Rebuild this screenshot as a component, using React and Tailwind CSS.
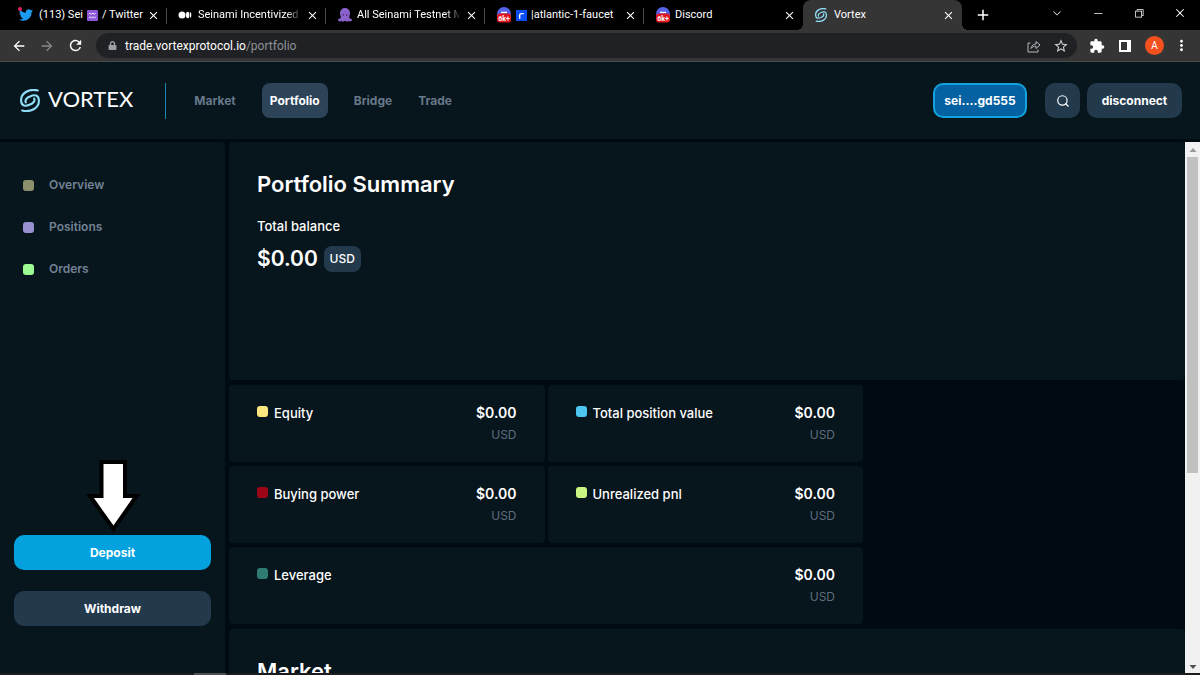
import { useState } from 'react';
import { FaTwitter, FaLock } from 'react-icons/fa';
import {
  MdArrowBack,
  MdArrowForward,
  MdRefresh,
  MdStarBorder,
  MdClose,
  MdAdd,
  MdMoreVert,
  MdExtension,
} from 'react-icons/md';
import { VscChromeMinimize, VscChromeRestore, VscChromeClose, VscChevronDown } from 'react-icons/vsc';
import { Search } from 'lucide-react';

function VortexMark({ className }) {
  return (
    <svg viewBox="0 0 56 65" className={className} fill="none" stroke="#8fdcf6" strokeWidth="6" strokeLinecap="round">
      <path d="M50 4C25-2 1 12 3 34c1 14 12 16 25 10 10-4 14-11 12-17" />
      <path d="M6 61c25 6 49-8 47-30-1-14-12-16-25-10-10 4-14 11-12 17" />
    </svg>
  );
}

function DiscordBadge() {
  return (
    <svg viewBox="0 0 16 16" className="size-4 shrink-0">
      <circle cx="8" cy="7" r="7" fill="#5562ea" />
      <path d="M5 5.500h6" stroke="#fff" strokeWidth="1.500" />
      <rect x="1" y="6.500" width="14" height="9" rx="3" fill="#e0161e" />
      <text x="8" y="13.500" textAnchor="middle" fontSize="7" fontWeight="700" fontFamily="Roboto, sans-serif" fill="#fff">
        6k+
      </text>
    </svg>
  );
}

function Medium() {
  return (
    <svg viewBox="0 0 14 14" className="size-[14px] shrink-0" fill="#fff">
      <circle cx="4" cy="7" r="3.500" />
      <ellipse cx="9.700" cy="7" rx="1.700" ry="3.300" />
      <ellipse cx="12.600" cy="7" rx=".7" ry="2.900" />
    </svg>
  );
}

function Octopus() {
  return (
    <svg viewBox="0 0 16 16" className="size-4 shrink-0" fill="#8b62cc">
      <path d="M8 1a5 5 0 0 0-5 5c0 2 .8 3 .8 4.200C3.800 12 1 11.200 1 13c0 1.500 2.500 1.800 4 .8l.5 1.200 2.500-1.300 2.500 1.300.5-1.200c1.500 1 4 .7 4-.8 0-1.800-2.800-1-2.800-2.800C12.200 9 13 8 13 6a5 5 0 0 0-5-5z" />
      <circle cx="6.300" cy="8" r=".8" fill="#3d2470" />
      <circle cx="9.700" cy="8" r=".8" fill="#3d2470" />
    </svg>
  );
}

function Aquarius() {
  return (
    <svg viewBox="0 0 12 12" className="size-[11px] shrink-0">
      <rect width="12" height="12" rx="1" fill="#8a55d6" />
      <path d="M2 4.500l1.500-1 1.500 1 1.500-1 1.500 1 1.500-1M2 8.500l1.500-1 1.500 1 1.500-1 1.500 1 1.500-1" stroke="#fff" fill="none" />
    </svg>
  );
}

function BlueSquare() {
  return (
    <svg viewBox="0 0 12 12" className="size-[11px] shrink-0">
      <rect width="12" height="12" fill="#0a4df0" />
      <path d="M4 9.500V6a2 2 0 0 1 2-2h2.500" stroke="#fff" strokeWidth="1.500" fill="none" />
    </svg>
  );
}

const tabs = [
  {
    id: 'twitter',
    icon: (
      <span className="relative shrink-0">
        <FaTwitter className="size-[14px] text-[#1d9bf0]" />
        <span className="absolute -left-px -top-px size-1 rounded-full bg-[#e0245e]" />
      </span>
    ),
    title: (
      <>
        (113) Sei <Aquarius /> / Twitter
      </>
    ),
  },
  { id: 'medium', icon: <Medium />, title: 'Seinami Incentivized T', fade: true },
  { id: 'octopus', icon: <Octopus />, title: 'All Seinami Testnet Mi', fade: true },
  {
    id: 'faucet',
    icon: <DiscordBadge />,
    title: (
      <>
        <BlueSquare /> |atlantic-1-faucet
      </>
    ),
  },
  { id: 'discord', icon: <DiscordBadge />, title: 'Discord' },
  { id: 'vortex', icon: <VortexMark className="size-[14px] shrink-0" />, title: 'Vortex', active: true },
];

function BrowserTab({ tab, divider }) {
  return (
    <div
      className={
        tab.active
          ? 'relative flex h-full min-w-0 max-w-[159px] flex-1 items-center rounded-t-lg bg-[#353536] pl-[11px] pr-[7px]'
          : 'relative flex h-full min-w-0 max-w-[159px] flex-1 items-center pl-[11px] pr-[7px]'
      }
    >
      {divider && <span className="absolute right-0 top-2 h-4 w-px bg-[#4a4a4c]" />}
      {tab.active && (
        <>
          <span className="absolute -left-1.5 bottom-0 size-1.5 bg-[radial-gradient(circle_at_top_left,transparent_6px,#353536_6px)]" />
          <span className="absolute -right-1.5 bottom-0 size-1.5 bg-[radial-gradient(circle_at_top_right,transparent_6px,#353536_6px)]" />
        </>
      )}
      <span className="flex w-5 shrink-0">{tab.icon}</span>
      <span
        className={
          tab.fade
            ? 'flex min-w-0 flex-1 whitespace-nowrap [mask-image:linear-gradient(to_right,black_85%,transparent)]'
            : 'flex min-w-0 flex-1 items-center gap-1 whitespace-nowrap'
        }
      >
        {tab.title}
      </span>
      <button aria-label="Close tab" className="ml-1 shrink-0">
        <MdClose className="size-[13px]" />
      </button>
    </div>
  );
}

function BrowserChrome() {
  return (
    <div className="shrink-0 font-[Roboto,sans-serif] text-white">
      <div className="flex h-[30px] items-center bg-black pl-2 text-[11px]">
        <div className="flex h-full min-w-0 flex-1">
          {tabs.map((tab, i) => (
            <BrowserTab key={tab.id} tab={tab} divider={i < 4} />
          ))}
          <button aria-label="New tab" className="ml-3">
            <MdAdd className="size-[18px]" />
          </button>
        </div>
        <div className="flex h-full items-center gap-[29px] pb-1 pr-[14px]">
          <button aria-label="Search tabs"><VscChevronDown className="size-3" /></button>
          <button aria-label="Minimize"><VscChromeMinimize className="size-3" /></button>
          <button aria-label="Restore"><VscChromeRestore className="size-3" /></button>
          <button aria-label="Close"><VscChromeClose className="size-3" /></button>
        </div>
      </div>
      <div className="flex h-8 items-center border-b border-[#4a4a4c] bg-[#353536] pl-[11px] pr-[14px]">
        <div className="flex items-center gap-3">
          <button aria-label="Back"><MdArrowBack className="size-4" /></button>
          <button aria-label="Forward"><MdArrowForward className="size-4 text-[#8a8a8c]" /></button>
          <button aria-label="Reload"><MdRefresh className="size-[17px]" /></button>
        </div>
        <div className="ml-3 flex h-[25px] min-w-0 flex-1 items-center rounded-full bg-[#202124] pl-3 pr-2">
          <FaLock className="size-[9px] text-[#9aa0a6]" />
          <span className="ml-2 flex-1 text-xs">
            trade.vortexprotocol.io<span className="text-[#8e9297]">/portfolio</span>
          </span>
          <button aria-label="Share">
            <svg viewBox="0 0 14 14" className="size-[14px]" fill="none" stroke="#b4b7bb">
              <path d="M3.500 4H1v9h10v-2.500" />
              <path d="M4 9.500c.5-3 2.500-4.500 5-4.500V2.500L13 6 9 9.500V7.200c-2 0-3.500.5-5 2.300z" strokeLinejoin="round" />
            </svg>
          </button>
          <button aria-label="Bookmark" className="ml-3"><MdStarBorder className="size-4 text-[#d0d2d5]" /></button>
        </div>
        <div className="ml-3 flex items-center gap-[13px]">
          <button aria-label="Extensions"><MdExtension className="size-4" /></button>
          <button aria-label="Side panel">
            <svg viewBox="0 0 14 14" className="size-[14px]">
              <path d="M2 2h10v10H2z" fill="none" stroke="#fff" strokeWidth="2" />
              <path d="M9 1h4v12H9z" fill="#fff" />
            </svg>
          </button>
          <button aria-label="Profile" className="flex size-[19px] items-center justify-center rounded-full bg-[#f4511e] text-[10px]">A</button>
          <button aria-label="Menu" className="-mx-1"><MdMoreVert className="size-[17px]" /></button>
        </div>
      </div>
    </div>
  );
}

const navLinks = ['Market', 'Portfolio', 'Bridge', 'Trade'];

function Header() {
  const [page, setPage] = useState('Portfolio');

  return (
    <header className="flex h-[77px] shrink-0 items-center bg-[#07151c] pl-5 pr-[18px] text-xs font-bold">
      <VortexMark className="h-[23px] w-5" />
      <span className="ml-2 pb-1 font-[Lato,sans-serif] text-[22px] font-normal leading-6 text-white">VORTEX</span>
      <span className="ml-8 h-9 w-px bg-[#1c86b4]" />
      <nav className="ml-7 flex gap-[26px]">
        {navLinks.map((name) => (
          <a
            key={name}
            href="#"
            onClick={() => setPage(name)}
            className={
              page === name
                ? 'flex h-[35px] items-center rounded-lg bg-[#2d4358] px-2 text-white'
                : 'flex h-[35px] items-center text-[#66788a]'
            }
          >
            {name}
          </a>
        ))}
      </nav>
      <div className="ml-auto flex items-center">
        <button className="h-[35px] w-[94px] rounded-[10px] border-2 border-[#12a2dd] bg-[#0461a2] text-white">sei....gd555</button>
        <button aria-label="Search" className="ml-[18px] flex h-[35px] w-[35px] items-center justify-center rounded-[10px] bg-[#233a4d] text-white">
          <Search className="size-[14px]" />
        </button>
        <button className="ml-[7px] h-[35px] w-[95px] rounded-[10px] bg-[#233a4d] text-white">disconnect</button>
      </div>
    </header>
  );
}

function Sidebar() {
  return (
    <aside className="flex w-[225px] shrink-0 flex-col rounded-tr bg-[#07151c] px-[14px] pb-[47px] pt-[33px] text-xs">
      <nav className="flex flex-col gap-[22px] px-[9px] font-semibold text-[#728294]">
        <a href="#" className="flex h-5 items-center gap-[15px]"><span className="size-[11px] rounded-[3px] bg-[#8c8f6c]" />Overview</a>
        <a href="#" className="flex h-5 items-center gap-[15px]"><span className="size-[11px] rounded-[3px] bg-[#9791d0]" />Positions</a>
        <a href="#" className="flex h-5 items-center gap-[15px]"><span className="size-[11px] rounded-[3px] bg-[#9dfb94]" />Orders</a>
      </nav>
      <svg viewBox="0 0 54 76" className="ml-[72px] mt-auto h-[76px] w-[54px]">
        <path d="M15.500 3h23.500v34h11.500L27.500 70 4 37h11.500z" fill="#fff" stroke="#000" strokeWidth="4" />
      </svg>
      <button className="h-[35px] rounded-[10px] bg-[#03a2df] font-bold text-white">Deposit</button>
      <button className="mt-[21px] h-[35px] rounded-[10px] bg-[#233a4d] font-bold text-white">Withdraw</button>
    </aside>
  );
}

function StatCard({ label, dot, wide }) {
  return (
    <div
      className={
        wide
          ? 'col-span-2 flex h-[77px] justify-between rounded bg-[#07151c] px-7 pt-[17px]'
          : 'flex h-[77px] justify-between rounded bg-[#07151c] px-7 pt-[17px]'
      }
    >
      <div className="flex h-5 gap-[6px] text-[13px] font-medium leading-[22px]">
        <span className={`mt-1 size-[11px] rounded-[3px] ${dot}`} />
        {label}
      </div>
      <div className="text-right">
        <p className="text-sm font-semibold leading-[22px]">$0.00</p>
        <p className="text-xs leading-[22px] text-[#5f6d7e]">USD</p>
      </div>
    </div>
  );
}

function ScrollBar() {
  return (
    <div className="flex w-[15px] shrink-0 flex-col items-center bg-[#f1f1f1]">
      <svg viewBox="0 0 15 15" className="size-[15px] shrink-0"><path d="M4.500 10h7L8 6z" fill="#9a9a9a" /></svg>
      <div className="flex-1 self-stretch px-0.5">
        <div className="h-[63%] bg-[#c1c1c1]" />
      </div>
      <svg viewBox="0 0 15 15" className="size-[15px] shrink-0"><path d="M4.500 7h7L8 11z" fill="#505050" /></svg>
    </div>
  );
}

export default function App() {
  return (
    <div className="flex h-screen flex-col overflow-hidden bg-[#000b11] font-[Inter,sans-serif] text-white">
      <BrowserChrome />
      <Header />
      <div className="mt-[3px] flex min-h-0 flex-1">
        <Sidebar />
        <main className="ml-1 min-w-0 flex-1 overflow-hidden">
          <section className="h-[238px] rounded bg-[#07151c] px-7 pt-7">
            <h1 className="text-[22px] font-semibold leading-7">Portfolio Summary</h1>
            <p className="mt-[18px] text-[13px] font-medium leading-5">Total balance</p>
            <div className="mt-[9px] flex items-center gap-1.5">
              <span className="text-[21px] font-semibold leading-7">$0.00</span>
              <span className="flex h-[26px] w-[37px] items-center justify-center rounded-lg bg-[#233a4d] text-xs font-medium">USD</span>
            </div>
          </section>
          <section className="mt-[5px] grid max-w-[634px] grid-cols-2 gap-x-[3px] gap-y-1">
            <StatCard label="Equity" dot="bg-[#fbe57f]" />
            <StatCard label="Total position value" dot="bg-[#4cc5f1]" />
            <StatCard label="Buying power" dot="bg-[#9c0618]" />
            <StatCard label="Unrealized pnl" dot="bg-[#cbf582]" />
            <StatCard label="Leverage" dot="bg-[#2f7a73]" wide />
          </section>
          <section className="mt-[5px] h-[238px] rounded bg-[#07151c] px-7 pt-7">
            <h2 className="text-[22px] font-semibold leading-7">Market</h2>
          </section>
        </main>
        <ScrollBar />
      </div>
      <div className="h-0.5 shrink-0 bg-[#1c1b20]">
        <div className="ml-[194px] h-full w-8 bg-[#4c4f55]" />
      </div>
    </div>
  );
}
